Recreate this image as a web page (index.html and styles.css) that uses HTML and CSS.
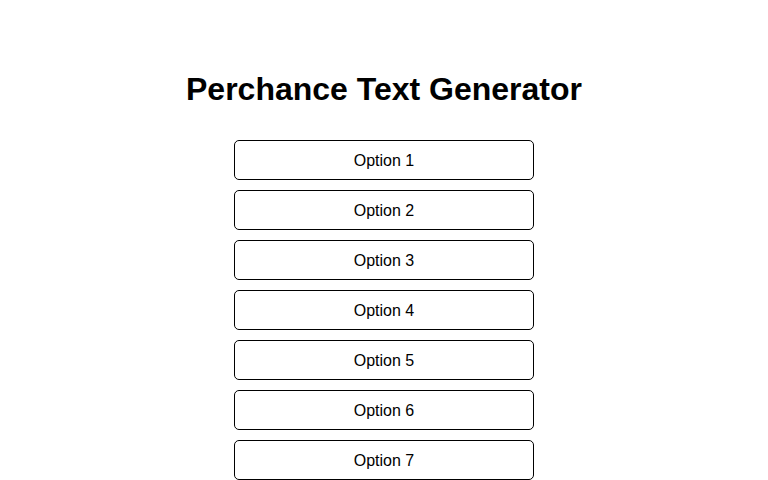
FILE: index.html
```html
<!DOCTYPE html>
<html lang="en">
<head>
  <meta charset="UTF-8" />
  <meta name="viewport" content="width=device-width, initial-scale=1" />
  <title>Perchance Text Generator</title>
  <link rel="stylesheet" href="styles.css">
</head>
<body>

  <div class="container">
    <h1>Perchance Text Generator</h1>
    <div class="options">
      <button class="option">Option 1</button>
      <button class="option">Option 2</button>
      <button class="option">Option 3</button>
      <button class="option">Option 4</button>
      <button class="option">Option 5</button>
      <button class="option">Option 6</button>
      <button class="option">Option 7</button>
    </div>
  </div>

</body>
</html>
```

FILE: styles.css
```css
* {
  box-sizing: border-box;
}

body {
  margin: 0;
  padding: 50px 50px 0;
  font-family: "Liberation Sans", Arial, sans-serif;
  color: #000;
  background: #fff;
}

.container {
  text-align: center;
}

h1 {
  font-size: 32px;
  font-weight: 700;
  margin: 21px 0 0;
  line-height: 37px;
}

.options {
  display: flex;
  flex-direction: column;
  align-items: center;
  gap: 10px;
  margin-top: 32px;
}

.option {
  width: 300px;
  height: 40px;
  padding: 2px 6px 0;
  background: #fff;
  border: 1px solid #000;
  border-radius: 5px;
  font-family: "Liberation Sans", Arial, sans-serif;
  font-size: 16px;
  color: #000;
  cursor: pointer;
}
```
